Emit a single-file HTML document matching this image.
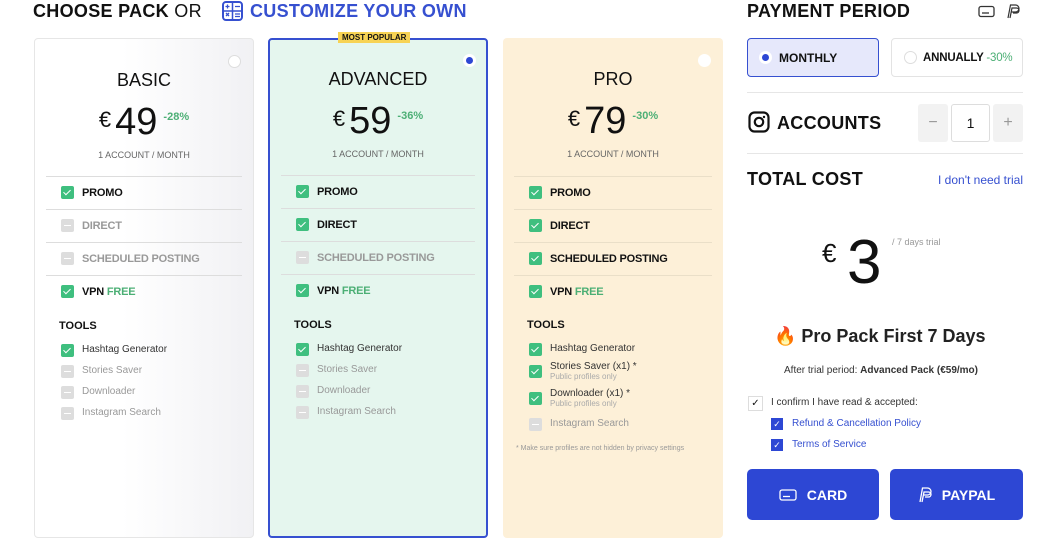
<!DOCTYPE html>
<html><head><meta charset="utf-8"><style>
*{box-sizing:border-box;margin:0;padding:0}
body{width:1044px;height:528px;overflow:hidden;background:#fff;font-family:"Liberation Sans",sans-serif;position:relative;color:#111}
.a{position:absolute}
.h{font-weight:bold;font-size:18px;letter-spacing:.3px}
.card{position:absolute;top:38px;width:220px;height:500px;border-radius:4px}
.card .t{position:absolute;top:31px;width:100%;text-align:center;font-size:18px}
.card .p{position:absolute;top:62px;width:100%;text-align:center}
.card .p .e{font-size:22px;vertical-align:top;position:relative;top:6px}
.card .p .n{font-size:38px;margin-left:4px}
.card .p .d{font-size:11px;font-weight:bold;color:#4caf75;vertical-align:top;position:relative;top:10px;margin-left:6px}
.card .m{position:absolute;top:111px;width:100%;text-align:center;font-size:9px;color:#666}
.hr{position:absolute;left:11px;right:11px;height:1px;background:#ddd}
.f{position:absolute;left:26px;font-size:11px;font-weight:bold;display:flex;align-items:center;gap:8px;white-space:nowrap;letter-spacing:-.2px}
.f.off{color:#999}
.cb{width:13px;height:13px;border-radius:2px;background:#3fbf7f;display:inline-block;position:relative;flex:none}
.cb:after{content:"";position:absolute;left:4px;top:2px;width:3px;height:6px;border:solid #fff;border-width:0 1.5px 1.5px 0;transform:rotate(45deg)}
.cb.x{background:#ddd}.cb.x:after{left:3px;top:6px;width:7px;height:0;border-width:1.5px 0 0 0;transform:none}
.tl{position:absolute;left:24px;top:281px;font-size:11px;font-weight:bold}
.tt{position:absolute;left:26px;font-size:10px;color:#333;display:flex;gap:8px;white-space:nowrap}
.tt.off{color:#999}
.sm{font-size:8px;color:#aaa;display:block}
.rad{position:absolute;top:16px;right:12px;width:13px;height:13px;border-radius:50%;border:1px solid #ddd;background:#fff}
.btn{position:absolute;top:469px;height:51px;border-radius:5px;background:#2d47d4;color:#fff;font-weight:bold;font-size:14px;display:flex;align-items:center;justify-content:center;gap:10px}
</style></head><body>
<div class="a h" style="left:33px;top:1px;font-size:18px">CHOOSE PACK <span style="font-weight:normal">OR</span></div>
<svg class="a" style="left:222px;top:1px" width="21" height="20" viewBox="0 0 21 20"><rect x="1" y="1" width="19" height="18" rx="3" fill="none" stroke="#3650d0" stroke-width="2"/><path d="M10.5 1v18M1 10h19" stroke="#3650d0" stroke-width="1.5"/><path d="M5.5 3.5v4M3.5 5.5h4M13 5.5h5M4 12l3 3M7 12l-3 3M13 13h5M13 15.5h5" stroke="#3650d0" stroke-width="1.3"/></svg>
<div class="a h" style="left:250px;top:1px;color:#3650d0">CUSTOMIZE YOUR OWN</div>

<div class="card" style="left:34px;border:1px solid #e6e6e6;background:linear-gradient(90deg,#fff 40%,#f1f1f4)">
<div class="rad"></div><div class="t">BASIC</div>
<div class="p"><span class="e">€</span><span class="n">49</span><span class="d">-28%</span></div>
<div class="m">1 ACCOUNT / MONTH</div>
<div class="hr" style="top:137px"></div><div class="hr" style="top:170px"></div><div class="hr" style="top:203px"></div><div class="hr" style="top:236px"></div>
<div class="f" style="top:147px"><i class="cb"></i>PROMO</div>
<div class="f off" style="top:180px"><i class="cb x"></i>DIRECT</div>
<div class="f off" style="top:213px"><i class="cb x"></i>SCHEDULED POSTING</div>
<div class="f" style="top:246px"><i class="cb"></i><span>VPN <span style="color:#4caf75">FREE</span></span></div>
<div class="tl">TOOLS</div>
<div class="tt" style="top:305px"><i class="cb"></i>Hashtag Generator</div>
<div class="tt off" style="top:326px"><i class="cb x"></i>Stories Saver</div>
<div class="tt off" style="top:347px"><i class="cb x"></i>Downloader</div>
<div class="tt off" style="top:368px"><i class="cb x"></i>Instagram Search</div>
</div>

<div class="card" style="left:268px;border:2px solid #3650d0;background:#e5f6ee">
<div class="a" style="left:68px;top:-8px;background:#f7d354;font-size:8px;font-weight:bold;padding:1px 4px">MOST POPULAR</div>
<div class="rad" style="border-color:#fff;right:10px;top:14px"><div style="width:7px;height:7px;border-radius:50%;background:#2d47d4;margin:2px"></div></div>
<div class="t" style="top:29px">ADVANCED</div>
<div class="p" style="top:60px"><span class="e">€</span><span class="n">59</span><span class="d">-36%</span></div>
<div class="m" style="top:109px">1 ACCOUNT / MONTH</div>
<div class="hr" style="top:135px"></div><div class="hr" style="top:168px"></div><div class="hr" style="top:201px"></div><div class="hr" style="top:234px"></div>
<div class="f" style="top:145px"><i class="cb"></i>PROMO</div>
<div class="f" style="top:178px"><i class="cb"></i>DIRECT</div>
<div class="f off" style="top:211px"><i class="cb x"></i>SCHEDULED POSTING</div>
<div class="f" style="top:244px"><i class="cb"></i><span>VPN <span style="color:#4caf75">FREE</span></span></div>
<div class="tl" style="top:279px">TOOLS</div>
<div class="tt" style="top:303px"><i class="cb"></i>Hashtag Generator</div>
<div class="tt off" style="top:324px"><i class="cb x"></i>Stories Saver</div>
<div class="tt off" style="top:345px"><i class="cb x"></i>Downloader</div>
<div class="tt off" style="top:366px"><i class="cb x"></i>Instagram Search</div>
</div>

<div class="card" style="left:503px;background:#fdf0d8">
<div class="rad" style="border-color:#fff"></div><div class="t">PRO</div>
<div class="p"><span class="e">€</span><span class="n">79</span><span class="d">-30%</span></div>
<div class="m">1 ACCOUNT / MONTH</div>
<div class="hr" style="top:138px;background:#eadfc8"></div><div class="hr" style="top:171px;background:#eadfc8"></div><div class="hr" style="top:204px;background:#eadfc8"></div><div class="hr" style="top:237px;background:#eadfc8"></div>
<div class="f" style="top:148px"><i class="cb"></i>PROMO</div>
<div class="f" style="top:181px"><i class="cb"></i>DIRECT</div>
<div class="f" style="top:214px"><i class="cb"></i>SCHEDULED POSTING</div>
<div class="f" style="top:247px"><i class="cb"></i><span>VPN <span style="color:#4caf75">FREE</span></span></div>
<div class="tl">TOOLS</div>
<div class="tt" style="top:305px"><i class="cb"></i>Hashtag Generator</div>
<div class="tt" style="top:323px;align-items:center"><i class="cb"></i><span>Stories Saver (x1) *<span class="sm">Public profiles only</span></span></div>
<div class="tt" style="top:350px;align-items:center"><i class="cb"></i><span>Downloader (x1) *<span class="sm">Public profiles only</span></span></div>
<div class="tt off" style="top:380px"><i class="cb x"></i>Instagram Search</div>
<div class="a" style="left:13px;top:407px;font-size:7px;color:#999;white-space:nowrap">* Make sure profiles are not hidden by privacy settings</div>
</div>

<div class="a h" style="left:747px;top:1px">PAYMENT PERIOD</div>
<svg class="a" style="left:978px;top:5px" width="18" height="13"><rect x="1" y="1.5" width="15" height="10" rx="2" fill="none" stroke="#333" stroke-width="1.3"/><path d="M4 8h7" stroke="#333" stroke-width="1.3"/></svg>
<svg class="a" style="left:1005px;top:3px" width="16" height="17"><path d="M3 15l2.5-13h5a3 3 0 0 1 0 7H6.5M5 15l2-10h4.5a2.5 2.5 0 0 1 0 5H8" fill="none" stroke="#333" stroke-width="1.2"/></svg>
<div class="a" style="left:747px;top:38px;width:132px;height:39px;border:1.5px solid #3650d0;border-radius:4px;background:#e6e8fb;font-size:12px;font-weight:bold;display:flex;align-items:center;padding-left:14px;gap:10px"><span style="width:7px;height:7px;border-radius:50%;background:#2d47d4;box-shadow:0 0 0 3px #fff"></span>MONTHLY</div>
<div class="a" style="left:891px;top:38px;width:132px;height:39px;border:1px solid #e3e3e3;border-radius:4px;font-size:11.5px;font-weight:bold;display:flex;align-items:center;padding-left:12px;gap:6px;white-space:nowrap;letter-spacing:-.2px"><span style="width:13px;height:13px;border-radius:50%;border:1px solid #ddd"></span><span>ANNUALLY <span style="color:#4caf75;font-weight:normal">-30%</span></span></div>
<div class="a" style="left:747px;top:92px;width:276px;height:1px;background:#e6e6e6"></div>
<svg class="a" style="left:748px;top:111px" width="22" height="22"><rect x="1.5" y="1.5" width="19" height="19" rx="5" fill="none" stroke="#111" stroke-width="2.2"/><circle cx="11" cy="11" r="4.2" fill="none" stroke="#111" stroke-width="2.2"/><circle cx="16" cy="6" r="1.2" fill="#111"/></svg>
<div class="a h" style="left:777px;top:113px">ACCOUNTS</div>
<div class="a" style="left:918px;top:104px;width:30px;height:38px;background:#f2f2f2;border-radius:3px;text-align:center;line-height:38px;color:#999;font-size:16px">−</div>
<div class="a" style="left:951px;top:104px;width:39px;height:38px;border:1px solid #ddd;border-radius:3px;text-align:center;line-height:36px;font-size:14px">1</div>
<div class="a" style="left:993px;top:104px;width:30px;height:38px;background:#f2f2f2;border-radius:3px;text-align:center;line-height:38px;color:#999;font-size:16px">+</div>
<div class="a" style="left:747px;top:153px;width:276px;height:1px;background:#e6e6e6"></div>
<div class="a h" style="left:747px;top:169px">TOTAL COST</div>
<div class="a" style="left:938px;top:173px;font-size:12px;color:#3650d0">I don't need trial</div>
<div class="a" style="left:822px;top:238px;font-size:26px">€</div>
<div class="a" style="left:847px;top:228px;font-size:62px;line-height:70px">3</div>
<div class="a" style="left:892px;top:237px;font-size:9px;color:#999">/ 7 days trial</div>
<div class="a" style="left:774px;top:326px;font-size:18px;font-weight:bold;color:#222">🔥 Pro Pack First 7 Days</div>
<div class="a" style="left:784px;top:365px;font-size:10px;color:#333">After trial period: <b>Advanced Pack (€59/mo)</b></div>
<div class="a" style="left:748px;top:396px;width:15px;height:15px;border:1px solid #ddd;font-size:10px;text-align:center;line-height:13px">✓</div>
<div class="a" style="left:771px;top:397px;font-size:10px;color:#333">I confirm I have read &amp; accepted:</div>
<div class="a" style="left:771px;top:418px;width:12px;height:12px;background:#2d47d4;color:#fff;font-size:9px;text-align:center;line-height:12px">✓</div>
<div class="a" style="left:792px;top:418px;font-size:10px;color:#3650d0">Refund &amp; Cancellation Policy</div>
<div class="a" style="left:771px;top:439px;width:12px;height:12px;background:#2d47d4;color:#fff;font-size:9px;text-align:center;line-height:12px">✓</div>
<div class="a" style="left:792px;top:439px;font-size:10px;color:#3650d0">Terms of Service</div>
<div class="btn" style="left:747px;width:132px"><svg width="18" height="12"><rect x="1" y="1" width="16" height="10" rx="2" fill="none" stroke="#fff" stroke-width="1.3"/><path d="M4 7.5h7" stroke="#fff" stroke-width="1.3"/></svg>CARD</div>
<div class="btn" style="left:890px;width:133px"><svg width="14" height="17"><path d="M2 16l2.5-14h5a3 3 0 0 1 0 7H5.5M4 16l2-10h4.5a2.5 2.5 0 0 1 0 5H7" fill="none" stroke="#fff" stroke-width="1.3"/></svg>PAYPAL</div>
</body></html>
